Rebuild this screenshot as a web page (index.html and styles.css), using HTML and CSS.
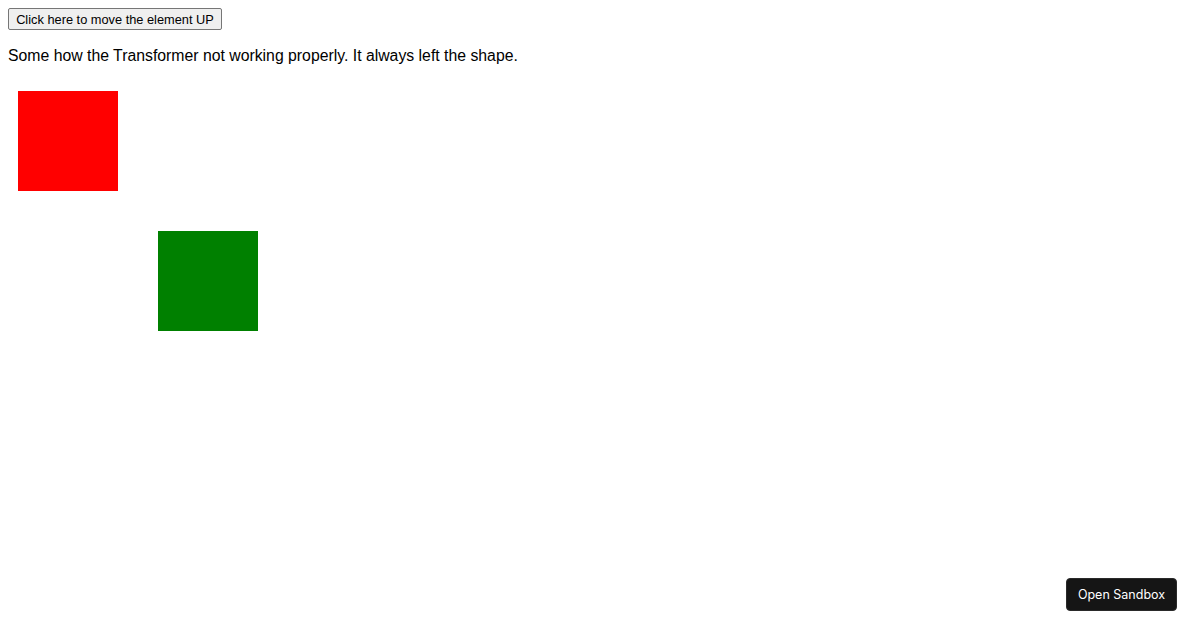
FILE: index.html
```html
<!DOCTYPE html>
<html lang="en">
<head>
    <meta charset="UTF-8">
    <title>Konva Transformer</title>
    <link rel="stylesheet" href="styles.css">
</head>
<body>
    <button class="move-btn">Click here to move the element UP</button>
    <p class="note">Some how the Transformer not working properly. It always left the shape.</p>

    <!-- Stage -->
    <div class="stage">
        <div class="shape shape-red"></div>
        <div class="shape shape-green"></div>
    </div>

    <a class="sandbox-btn" href="#">Open Sandbox</a>
</body>
</html>
```

FILE: styles.css
```css
body {
    margin: 8px;
    font-family: 'Liberation Sans', Arial, sans-serif;
    background: #ffffff;
    color: #000000;
}

.move-btn {
    font-family: 'Liberation Sans', Arial, sans-serif;
    font-size: 12.8px;
    padding: 1px 7px;
    height: 22px;
    width: 214px;
    border: 1px solid #767676;
    border-radius: 2px;
    background: #efefef;
    color: #000000;
}

.note {
    margin: 17px 0 0;
    font-size: 15.8px;
    line-height: 18px;
}

.stage {
    position: relative;
    width: 1184px;
    height: 400px;
    margin-top: 16px;
}

.shape {
    position: absolute;
    width: 100px;
    height: 100px;
}

.shape-red {
    left: 10px;
    top: 10px;
    background: #ff0000;
}

.shape-green {
    left: 150px;
    top: 150px;
    background: #008000;
}

.sandbox-btn {
    position: fixed;
    right: 23px;
    bottom: 19px;
    width: 111px;
    height: 33px;
    display: flex;
    align-items: center;
    justify-content: center;
    box-sizing: border-box;
    padding-bottom: 1px;
    background: #151515;
    color: #ffffff;
    border: 1px solid #2a2a2a;
    border-radius: 4px;
    font-family: Inter, 'Liberation Sans', sans-serif;
    font-size: 12.5px;
    text-decoration: none;
}
```
